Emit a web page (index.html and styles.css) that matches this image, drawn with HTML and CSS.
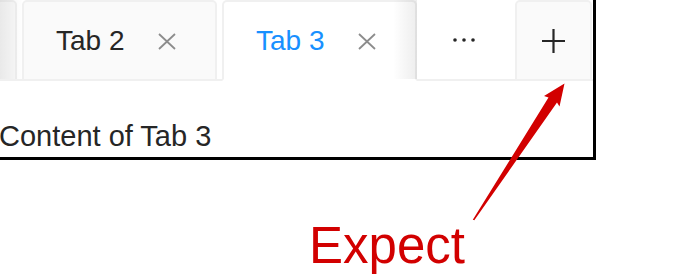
FILE: index.html
```html
<!DOCTYPE html>
<html lang="en">
<head>
<meta charset="utf-8">
<title>Tabs</title>
<link rel="stylesheet" href="styles.css">
</head>
<body>
<div class="frame">
  <div class="tabs-nav">
    <div class="nav-wrap">
      <div class="nav-list">
        <div class="tab tab-hidden" aria-hidden="true"></div>
        <div class="tab">
          <span class="tab-label">Tab 2</span>
          <span class="tab-remove"><svg width="18" height="17" viewBox="0 0 18 17"><path d="M1 1 L17 16 M17 1 L1 16" stroke="#8c8c8c" stroke-width="1.8" fill="none"/></svg></span>
        </div>
        <div class="tab tab-active">
          <span class="tab-label">Tab 3</span>
          <span class="tab-remove"><svg width="18" height="17" viewBox="0 0 18 17"><path d="M1 1 L17 16 M17 1 L1 16" stroke="#8c8c8c" stroke-width="1.8" fill="none"/></svg></span>
        </div>
      </div>
    </div>
    <div class="nav-more">
      <svg width="22" height="4" viewBox="0 0 22 4"><circle cx="2" cy="2" r="1.8" fill="#262626"/><circle cx="11" cy="2" r="1.8" fill="#262626"/><circle cx="20" cy="2" r="1.8" fill="#262626"/></svg>
    </div>
    <div class="nav-add">
      <svg width="23" height="24" viewBox="0 0 23 24"><path d="M11.5 0 V24 M0 12 H23" stroke="#262626" stroke-width="2.2" fill="none"/></svg>
    </div>
  </div>
  <div class="tab-content">Content of Tab 3</div>
</div>
<div class="annotation">Expect</div>
<svg class="arrow" width="680" height="274" viewBox="0 0 680 274">
  <polygon points="564.5,83.5 559.5,106.5 557,102.5 474.3,220.3 472.8,219.8 548.5,97.5 544,96" fill="#d20000"/>
</svg>
</body>
</html>
```
FILE: styles.css
```css
html, body {
  margin: 0;
  padding: 0;
  overflow: hidden;
  background: #fff;
  font-family: "Liberation Sans", Arial, sans-serif;
}

.frame {
  width: 616px;
  box-sizing: border-box;
  margin: -10px 0 0 -20px;
  border: 3px solid #000;
  padding: 7px 0 0 16px;
}

.tabs-nav {
  display: flex;
  height: 81px;
  box-sizing: border-box;
  border-bottom: 2px solid #f0f0f0;
  margin-bottom: 35px;
}

.nav-wrap {
  position: relative;
  flex: none;
  width: 418px;
  overflow: hidden;
  margin-bottom: -2px;
  display: flex;
}

.nav-wrap::before,
.nav-wrap::after {
  content: "";
  position: absolute;
  top: 0;
  bottom: 2px;
  width: 24px;
  z-index: 1;
  pointer-events: none;
}

.nav-wrap::before {
  left: 0;
  background: linear-gradient(to right, rgba(0, 0, 0, 0.07), rgba(0, 0, 0, 0));
}

.nav-wrap::after {
  right: 0;
  background: linear-gradient(to left, rgba(0, 0, 0, 0.07), rgba(0, 0, 0, 0));
}

.nav-list {
  display: flex;
  gap: 5px;
  margin-left: -177px;
}

.tab {
  flex: none;
  width: 195px;
  box-sizing: border-box;
  display: flex;
  align-items: center;
  padding: 0 39px 0 32px;
  border: 2px solid #f0f0f0;
  border-radius: 5px 5px 0 0;
  background: #fafafa;
  font-size: 28px;
  line-height: 44px;
  color: #262626;
  white-space: nowrap;
}

.tab-active {
  background: #fff;
  border-bottom-color: #fff;
  color: #1890ff;
}

.tab-remove {
  margin-left: auto;
  margin-top: 2px;
  display: flex;
}

.nav-more {
  flex: none;
  width: 98px;
  box-sizing: border-box;
  padding-right: 4px;
  display: flex;
  align-items: center;
  justify-content: center;
  background: #fff;
}

.nav-add {
  flex: none;
  width: 77px;
  box-sizing: border-box;
  margin: 0 1px -2px 0;
  border: 2px solid #f0f0f0;
  border-radius: 5px 5px 0 0;
  background: #fafafa;
  display: flex;
  align-items: center;
  justify-content: center;
}

.tab-content {
  font-size: 29px;
  line-height: 40px;
  padding-bottom: 1px;
  color: #262626;
  white-space: nowrap;
}

.annotation {
  margin-top: 58px;
  padding-left: 309px;
  font-size: 51px;
  line-height: 56px;
  color: #d20000;
}

.arrow {
  position: absolute;
  top: 0;
  left: 0;
  pointer-events: none;
}
```
